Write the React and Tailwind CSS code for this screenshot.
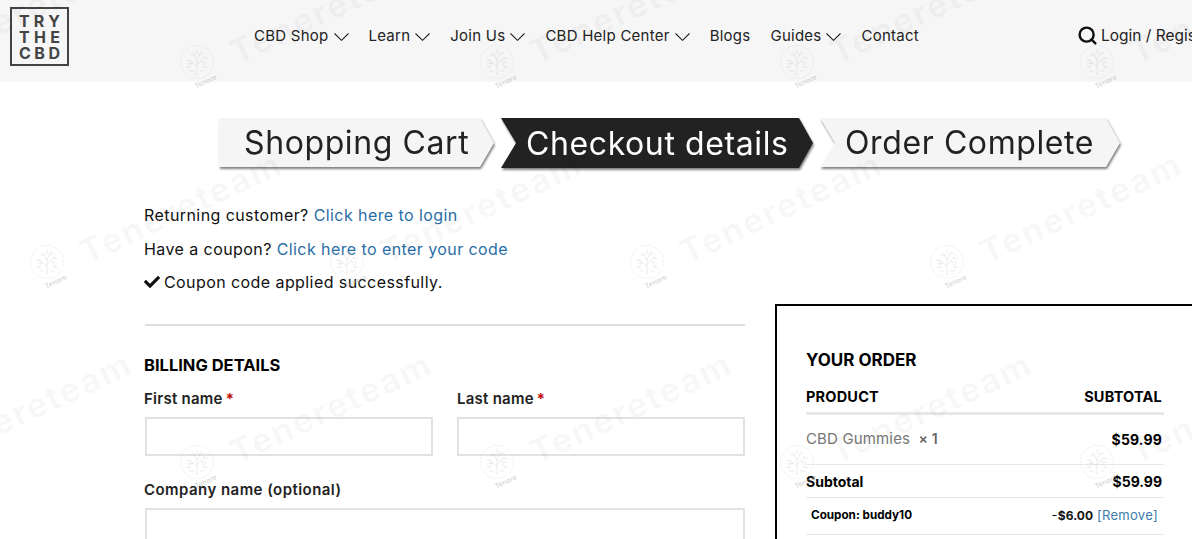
import React from "react";
import { Search } from "lucide-react";
import { FaCheck } from "react-icons/fa";

const navItems = [
  { label: "CBD Shop", caret: true },
  { label: "Learn", caret: true },
  { label: "Join Us", caret: true },
  { label: "CBD Help Center", caret: true },
  { label: "Blogs" },
  { label: "Guides", caret: true },
  { label: "Contact" },
];

const font = { fontFamily: "Inter" };

// watermark grid: staggered 300 x 200 tiles
const tiles = [];
for (let row = 0; row < 3; row++) {
  for (let col = -1; col < 5; col++) {
    tiles.push({ x: 180 + col * 300 - (row % 2 ? 150 : 0), y: 45 + row * 200 });
  }
}

function Chevron() {
  return (
    <svg width="15" height="8" viewBox="0 0 15 8" fill="none" stroke="#222" strokeWidth="1.1" className="ml-[5px] mt-[1px]">
      <polyline points="0.5,0.5 7.5,7.3 14.5,0.5" />
    </svg>
  );
}

function Seal() {
  return (
    <div className="relative w-[34px] h-[44px]">
      <svg width="34" height="34" viewBox="0 0 34 34" fill="none" stroke="#bdbdbd" strokeWidth="0.6">
        <circle cx="17" cy="17" r="16.5" strokeDasharray="1.5 1" />
        <path d="M17 30V14M17 22L9 14M17 20L25 11M17 15L13 7M17 15L21 6M11 16L6 15M23 13L28 14M12 17L9 22M22 18L26 22M14 26L9 26M20 26L25 26M13 18L7 19M21 16L27 18M15 11L10 9M19 10L24 8M17 9V4M11 22L6 23M23 22L28 23" />
      </svg>
      <span className="absolute left-[14px] top-[33px] -rotate-[25deg] text-[7px] leading-none font-semibold text-[#a8a8a8] [font-family:'Inter']">Tenere</span>
    </div>
  );
}

function Watermark() {
  return (
    <div className="absolute inset-0 overflow-hidden pointer-events-none">
      {tiles.map((t) => (
        <div key={`${t.x}-${t.y}`} className="absolute" style={{ left: t.x, top: t.y }}>
          <div className="opacity-45"><Seal /></div>
          <span className="absolute left-[52px] top-[-8px] origin-left -rotate-[25deg] whitespace-nowrap text-[34px] leading-none font-bold tracking-[2px] text-black/[0.035] [font-family:'Inter']">
            Tenereteam
          </span>
        </div>
      ))}
    </div>
  );
}

function Logo() {
  const rows = ["TRY", "THE", "CBD"];
  return (
    <div className="w-[59px] h-[59px] border-2 border-[#444] flex flex-col justify-center px-[7px]">
      {rows.map((r) => (
        <div key={r} className="flex justify-between text-[16px] leading-[16px] font-bold text-[#444] [font-family:'Inter']">
          {r.split("").map((c) => <span key={c}>{c}</span>)}
        </div>
      ))}
    </div>
  );
}

function Step({ children, dark, first }) {
  return (
    <div className="[filter:drop-shadow(1px_2px_1px_rgba(0,0,0,0.5))]">
      <div
        className={
          first
            ? "h-[49px] w-[275px] flex items-center pl-[25px] pt-[1px] bg-[#f5f5f5] text-[#222] [clip-path:polygon(0_0,261px_0,275px_25px,261px_49px,0_49px)]"
            : dark
            ? "h-[50px] w-[312px] flex items-center pl-[25px] pt-[1px] bg-[#222] text-white [clip-path:polygon(0_0,298px_0,312px_25px,298px_50px,0_50px,15px_25px)]"
            : "h-[49px] w-[300px] flex items-center pl-[25px] pt-[1px] bg-[#f5f5f5] text-[#222] [clip-path:polygon(0_0,286px_0,300px_25px,286px_49px,0_49px,15px_25px)]"
        }
      >
        <span className="text-[32px] leading-none tracking-[0.6px] whitespace-nowrap [font-family:'Inter'] font-normal">{children}</span>
      </div>
    </div>
  );
}

function Field({ label, required, className, labelClass = "" }) {
  return (
    <div className={className}>
      <label className={`block ${labelClass} text-[15px] leading-[20px] tracking-[0.25px] font-semibold text-[#222] mb-[8px]`}>
        {label}
        {required && <span className="text-[#b00] ml-[3px]">*</span>}
      </label>
      <input className="block w-full h-[39px] border-2 border-[#e2e2e2] bg-white" />
    </div>
  );
}

export default function App() {
  return (
    <div className="relative w-[1192px] h-[539px] overflow-hidden bg-white text-[#111]" style={font}>
      <header className="h-[82px] bg-[#f6f6f6] flex items-start">
        <div className="ml-[10px] mt-[7px]"><Logo /></div>
        <nav className="ml-[185px] mt-[26px] flex items-center gap-[20px] text-[15px] leading-[20px] tracking-[0.25px] text-[#222] whitespace-nowrap">
          {navItems.map((n) => (
            <div key={n.label} className="flex items-center">
              {n.label}
              {n.caret && <Chevron />}
            </div>
          ))}
        </nav>
        <div className="ml-[158px] mt-[25px] flex items-center gap-[3px] text-[15.5px] leading-[20px] text-[#222] whitespace-nowrap">
          <Search size={21} strokeWidth={2.8} color="#111" />
          Login / Register
        </div>
      </header>

      <div className="mt-[36px] ml-[219px] flex items-start gap-[7px]">
        <Step first>Shopping Cart</Step>
        <Step dark>Checkout details</Step>
        <Step>Order Complete</Step>
      </div>

      <div className="ml-[144px] flex items-start">
        <div className="w-[602px]">
          <div className="mt-[35px] text-[16px] leading-[24px] tracking-[0.42px] text-[#111]">
            <p>Returning customer? <a className="text-[#2a6ea6]">Click here to login</a></p>
            <p className="mt-[10px]">Have a coupon? <a className="text-[#2a6ea6]">Click here to enter your code</a></p>
            <p className="mt-[9px] flex items-center gap-[4px]"><FaCheck size={16} color="#111" />Coupon code applied successfully.</p>
          </div>
          <div className="mt-[30px] ml-[1px] border-t-2 border-[#ddd]" />
          <h2 className="mt-[27px] text-[16.5px] leading-[24px] font-bold text-black">BILLING DETAILS</h2>
          <div className="mt-[12px] ml-[1px] flex gap-[24px]">
            <Field label="First name" required className="w-[288px]" labelClass="-ml-[1px]" />
            <Field label="Last name" required className="w-[288px]" />
          </div>
          <div className="mt-[24px]">
            <label className="block text-[15px] leading-[20px] tracking-[0.45px] font-semibold text-[#222] mb-[8px]">Company name (optional)</label>
            <input className="block ml-[1px] w-[600px] h-[40px] border-2 border-[#e2e2e2] bg-white" />
          </div>
        </div>

        <aside className="ml-[30px] mt-[136px] w-[421px] shrink-0 border-2 border-black pl-[29px] pr-[30px] pt-[41px] pb-[40px] bg-white">
          <h3 className="text-[17px] leading-[26px] font-bold text-black">YOUR ORDER</h3>
          <div className="mt-[12px] h-[30px] flex justify-between items-center border-b-[3px] border-[#e8e8e8] pr-[2px] pb-[3px] text-[14.5px] font-bold tracking-[0.2px] text-black">
            <span>PRODUCT</span><span>SUBTOTAL</span>
          </div>
          <div className="h-[50px] flex justify-between items-center border-b border-[#e8e8e8] pr-[2px] text-[15px] tracking-[0.15px]">
            <span className="text-[#777]">CBD Gummies <b className="ml-[4px] font-semibold text-[#666] text-[14px]">× 1</b></span>
            <b className="text-black text-[14px]">$59.99</b>
          </div>
          <div className="h-[33px] flex justify-between items-center border-b border-[#e8e8e8] pr-[2px] font-bold text-black text-[14px]">
            <span>Subtotal</span><span>$59.99</span>
          </div>
          <div className="h-[37px] flex justify-between items-center border-b border-[#e8e8e8] pl-[5px] pr-[6px] text-[11.7px]">
            <b className="text-black">Coupon: buddy10</b>
            <span className="text-[13px] tracking-[0.3px] text-[#3b7cae]"><span className="text-[#111]">-</span><b className="text-[#111] text-[12px] tracking-normal">$6.00</b> [Remove]</span>
          </div>
        </aside>
      </div>

      <Watermark />
    </div>
  );
}
